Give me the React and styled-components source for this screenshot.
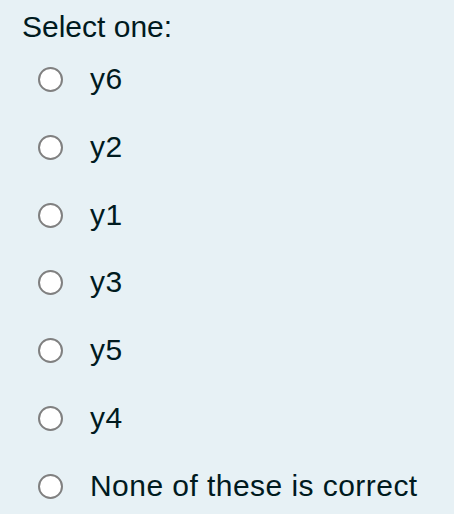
import React from "react";
import styled, { createGlobalStyle } from "styled-components";

const Global = createGlobalStyle`
  html, body { margin: 0; padding: 0; background: #e7f1f5; }
  body { font-family: "Liberation Sans", Arial, Helvetica, sans-serif; color: #001a1e; }
`;

const Panel = styled.div`
  background: #e7f1f5;
  width: 454px;
  height: 514px;
  box-sizing: border-box;
  padding: 4px 0 0 22px;
  font-size: 30px;
  line-height: 45px;
`;

const Prompt = styled.div`
  margin: 0;
`;

const Answers = styled.div`
  margin-top: 7px;
  display: flex;
  flex-direction: column;
  gap: 22.8px;
`;

const Option = styled.label`
  display: flex;
  align-items: center;
  height: 45px;
  cursor: pointer;
`;

const Radio = styled.span`
  box-sizing: border-box;
  width: 25px;
  height: 25px;
  margin: 2px 27px 0 16px;
  border-radius: 50%;
  border: 2px solid #808080;
  background: #ffffff;
  flex: none;
`;

const Text = styled.span`
  white-space: nowrap;
  letter-spacing: 0.45px;
`;

const options = ["y6", "y2", "y1", "y3", "y5", "y4", "None of these is correct"];

export default function App() {
  return (
    <>
      <Global />
      <Panel>
        <Prompt>Select one:</Prompt>
        <Answers>
          {options.map((o) => (
            <Option key={o}>
              <Radio />
              <Text>{o}</Text>
            </Option>
          ))}
        </Answers>
      </Panel>
    </>
  );
}
